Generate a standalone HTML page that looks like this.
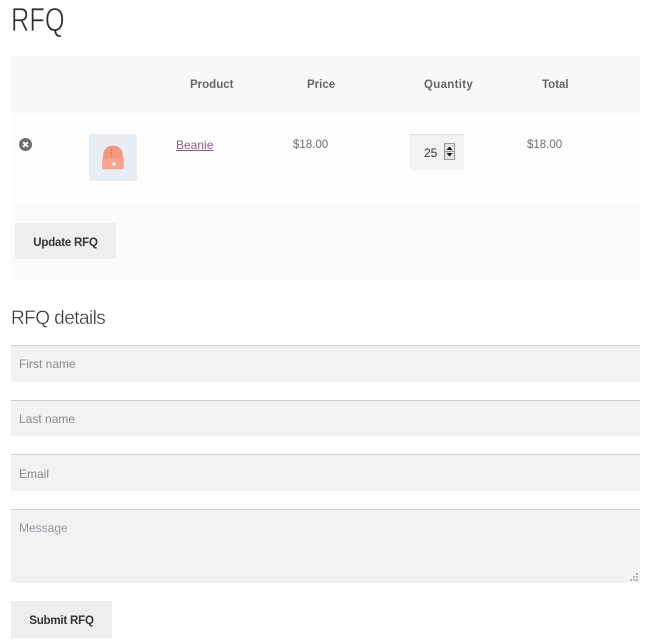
<!DOCTYPE html>
<html>
<head>
<meta charset="utf-8">
<style>
html,body{margin:0;padding:0;background:#fff;}
body{width:656px;height:643px;position:relative;overflow:hidden;font-family:"Liberation Sans",sans-serif;color:#6d6d6d;}
.a{position:absolute;white-space:nowrap;line-height:1;}
.b{position:absolute;}
.h{font-weight:bold;font-size:11.500px;color:#666;top:80px;}
.f{left:11px;width:629px;background:#f2f2f2;box-sizing:border-box;border-top:1px solid #d0d0d0;}
.p{left:19px;font-size:12px;color:#8a8a8a;}
.btn{background:#eee;color:#333;font-weight:bold;font-size:11.500px;text-align:center;letter-spacing:-0.200px;}
</style>
</head>
<body>
<div class="a" style="left:11px;top:3px;font-size:33px;color:#2f2f35;transform:scaleX(0.77);transform-origin:0 0;-webkit-text-stroke:0.700px #fff;">RFQ</div>

<div class="b" style="left:11px;top:56px;width:629px;height:57px;background:#f8f8f8;"></div>
<div class="b" style="left:11px;top:113px;width:629px;height:90px;background:#fdfdfd;"></div>
<div class="b" style="left:11px;top:203px;width:629px;height:77px;background:#fbfbfb;"></div>

<div class="a h" style="left:190px;">Product</div>
<div class="a h" style="left:307px;">Price</div>
<div class="a h" style="left:424px;letter-spacing:0.300px;">Quantity</div>
<div class="a h" style="left:542px;">Total</div>

<svg class="b" style="left:19px;top:138px;" width="13" height="13" viewBox="0 0 13 13">
<circle cx="6.500" cy="6.500" r="6.500" fill="#6b6f7a"/>
<path d="M4.200 4.200L8.800 8.800M8.800 4.200L4.200 8.800" stroke="#fff" stroke-width="2"/>
</svg>

<div class="b" style="left:89px;top:134px;width:48px;height:47px;background:#e9eef2;border-radius:2px;"></div>
<svg class="b" style="left:102px;top:145px;" width="22" height="25" viewBox="0 0 22 25">
<path d="M1.500 14V10C1.500 4.500 5.500 1 11 1C16.500 1 20.500 4.500 20.500 10V14Z" fill="#f6977f" stroke="#e08a76" stroke-width="0.500"/>
<path d="M10.500 1.500C9 5 9 9 9 13" stroke="#e0705a" stroke-width="0.700" fill="none"/>
<rect x="0.500" y="13" width="21" height="11" rx="1" fill="#f9a48e" stroke="#e8a090" stroke-width="0.500"/>
<rect x="10" y="17" width="4" height="4" fill="#e8e8e8" stroke="#c99" stroke-width="0.400"/>
</svg>

<div class="a" style="left:176px;top:139px;font-size:12px;color:#96588a;text-decoration:underline;">Beanie</div>
<div class="a" style="left:293px;top:140px;font-size:11.500px;color:#6d6d6d;">$18.00</div>

<div class="b" style="left:410px;top:134px;width:54px;height:36px;background:#f2f2f2;border-top:1px solid #ddd;box-sizing:border-box;"></div>
<div class="a" style="left:424px;top:147px;font-size:12px;color:#333;">25</div>
<div class="b" style="left:444px;top:143px;width:11px;height:17px;background:#e4e4e4;border:1px solid #999;box-sizing:border-box;"></div>
<div class="b" style="left:444px;top:151px;width:11px;height:1px;background:#999;"></div>
<svg class="b" style="left:444px;top:143px;" width="11" height="17" viewBox="0 0 11 17">
<path d="M5.500 3.500L8.500 7H2.500Z" fill="#111"/>
<path d="M5.500 13.500L8.500 10H2.500Z" fill="#111"/>
</svg>

<div class="a" style="left:527px;top:140px;font-size:11.500px;color:#6d6d6d;">$18.00</div>

<div class="b btn" style="left:15px;top:223px;width:101px;height:36px;line-height:40px;">Update RFQ</div>

<div class="a" style="left:11px;top:309px;font-size:19px;color:#333338;letter-spacing:-0.550px;-webkit-text-stroke:0.350px #fff;">RFQ details</div>

<div class="b f" style="top:345px;height:37px;"></div>
<div class="a p" style="top:358px;">First name</div>
<div class="b f" style="top:400px;height:36px;"></div>
<div class="a p" style="top:413px;">Last name</div>
<div class="b f" style="top:454px;height:37px;"></div>
<div class="a p" style="top:468px;">Email</div>
<div class="b f" style="top:509px;height:74px;"></div>
<div class="a p" style="top:522px;color:#8f97a3;">Message</div>
<svg class="b" style="left:629px;top:572px;" width="10" height="10" viewBox="0 0 10 10">
<g fill="#b5b5b5"><rect x="7" y="1" width="2" height="2"/><rect x="4" y="4" width="2" height="2"/><rect x="7" y="4" width="2" height="2"/><rect x="1" y="7" width="2" height="2"/><rect x="4" y="7" width="2" height="2"/><rect x="7" y="7" width="2" height="2"/></g>
</svg>

<div class="b btn" style="left:11px;top:601px;width:101px;height:37px;line-height:41px;">Submit RFQ</div>
</body>
</html>
